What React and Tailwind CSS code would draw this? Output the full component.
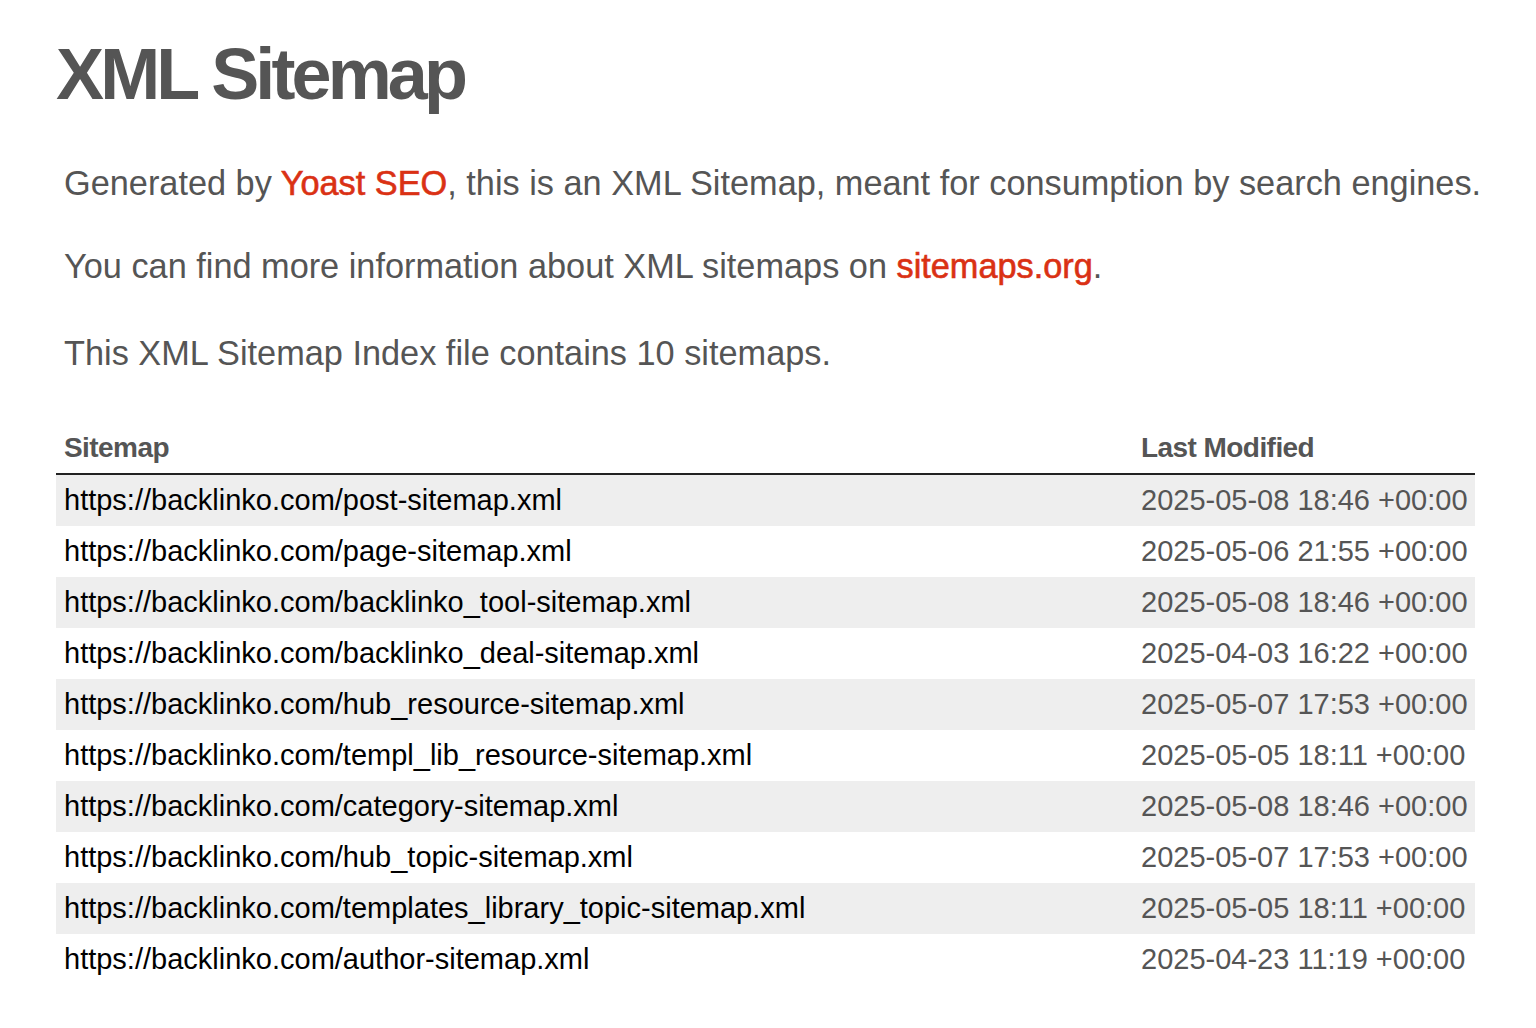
import React from "react";

const rows = [
  ["https://backlinko.com/post-sitemap.xml", "2025-05-08 18:46 +00:00"],
  ["https://backlinko.com/page-sitemap.xml", "2025-05-06 21:55 +00:00"],
  ["https://backlinko.com/backlinko_tool-sitemap.xml", "2025-05-08 18:46 +00:00"],
  ["https://backlinko.com/backlinko_deal-sitemap.xml", "2025-04-03 16:22 +00:00"],
  ["https://backlinko.com/hub_resource-sitemap.xml", "2025-05-07 17:53 +00:00"],
  ["https://backlinko.com/templ_lib_resource-sitemap.xml", "2025-05-05 18:11 +00:00"],
  ["https://backlinko.com/category-sitemap.xml", "2025-05-08 18:46 +00:00"],
  ["https://backlinko.com/hub_topic-sitemap.xml", "2025-05-07 17:53 +00:00"],
  ["https://backlinko.com/templates_library_topic-sitemap.xml", "2025-05-05 18:11 +00:00"],
  ["https://backlinko.com/author-sitemap.xml", "2025-04-23 11:19 +00:00"],
];

export default function App() {
  return (
    <div className="min-h-[1028px] w-[1536px] bg-white px-[56px] pt-[38px] font-['Liberation_Sans',Arial,sans-serif] text-[#555]">
      <h1 className="text-[72px] font-bold leading-[72px] tracking-[-0.054em] text-[#555]">XML Sitemap</h1>
      <div className="px-[8px] pt-[53px] text-[34.3px] leading-[40px]">
        <p className="whitespace-nowrap">
          Generated by <a className="text-[#da3114] [-webkit-text-stroke:0.6px_#da3114]">Yoast SEO</a>, this is an XML Sitemap, meant for consumption by search engines.
        </p>
        <p className="mt-[43px]">
          You can find more information about XML sitemaps on <a className="text-[#da3114] [-webkit-text-stroke:0.6px_#da3114]">sitemaps.org</a>.
        </p>
        <p className="mt-[47px]">This XML Sitemap Index file contains 10 sitemaps.</p>
      </div>
      <div className="mt-[49px] w-[1419px]">
        <div className="flex h-[53px] items-center border-b-2 border-[#222] text-[28px] font-bold text-[#555] tracking-[-0.02em]">
          <div className="flex-1 px-[8px]">Sitemap</div>
          <div className="w-[342px] shrink-0 whitespace-nowrap px-[8px]">Last Modified</div>
        </div>
        {rows.map(([u, d], i) => (
          <div key={i} className={`flex h-[51px] items-center text-[29px] ${i % 2 === 0 ? "bg-[#eee]" : "bg-white"}`}>
            <div className="min-w-0 flex-1 whitespace-nowrap px-[8px] text-black">{u}</div>
            <div className="w-[342px] shrink-0 whitespace-nowrap px-[8px] text-[#555]">{d}</div>
          </div>
        ))}
      </div>
    </div>
  );
}
